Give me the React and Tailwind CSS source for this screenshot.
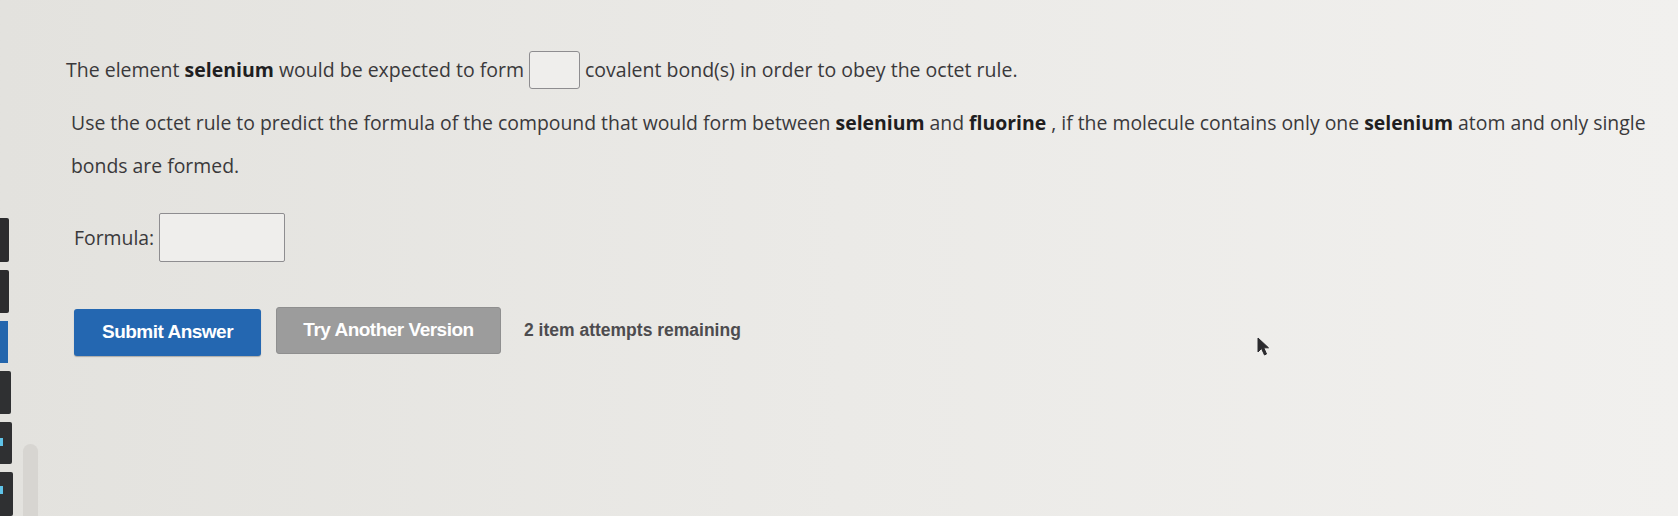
import React from 'react';

function Cursor() {
  return (
    <svg width="14" height="20" viewBox="0 0 14 20" className="absolute left-[1257px] top-[337px]">
      <path d="M1 1 L1 15 L4.5 11.5 L7.5 18 L9.5 17 L6.8 10.8 L11.5 10.8 Z" fill="#2b2a2e" stroke="#2b2a2e" strokeWidth="1" strokeLinejoin="round" />
    </svg>
  );
}

function SideStrip() {
  return (
    <div className="flex w-[10px] shrink-0 flex-col gap-[8px] pt-[218px]">
      <div className="h-[44px] w-[9px] rounded-r-[2px] bg-[#2c2c2e]" />
      <div className="h-[43px] w-[9px] rounded-r-[2px] bg-[#2c2c2e]" />
      <div className="h-[43px] w-[8px] bg-[#2466ad]" />
      <div className="h-[43px] w-[11px] rounded-r-[2px] bg-[#2f3032]" />
      <div className="relative h-[42px] w-[12px] rounded-r-[2px] bg-[#2f3032]">
        <span className="absolute left-0 top-[16px] h-[8px] w-[3px] bg-[#5fc3e8]" />
      </div>
      <div className="relative h-[44px] w-[13px] rounded-r-[2px] bg-[#2f3032]">
        <span className="absolute left-0 top-[14px] h-[8px] w-[3px] bg-[#5fc3e8]" />
      </div>
    </div>
  );
}

export default function App() {
  return (
    <div
      className="relative flex h-[516px] w-full overflow-hidden bg-linear-to-r from-[#e3e2de] via-[#ebeae7] to-[#f1f0ee] text-[#3a393b]"
      style={{ fontFamily: '"Open Sans", "Noto Sans", sans-serif' }}
    >
      <SideStrip />

      {/* scroll track */}
      <div className="flex w-[56px] shrink-0 flex-col justify-end pl-[13px]">
        <div className="h-[72px] w-[15px] rounded-t-full bg-[#d7d5d1]" />
      </div>

      <div className="flex flex-col pt-[51px]">
        {/* question 1 */}
        <div className="flex items-center whitespace-nowrap text-[19.5px]">
          <span>
            The element <b className="font-bold text-[#1f1e21]">selenium</b> would be expected to form
          </span>
          <span className="mx-[5px] h-[38px] w-[51px] rounded-[3px] border border-[#8e8d90] bg-[#efeeec]" />
          <span>covalent bond(s) in order to obey the octet rule.</span>
        </div>

        {/* question 2 */}
        <p className="ml-[5px] mt-[12px] whitespace-nowrap text-[19.4px] leading-[43px]">
          Use the octet rule to predict the formula of the compound that would form between{' '}
          <b className="font-bold text-[#1f1e21]">selenium</b> and <b className="font-bold text-[#1f1e21]">fluorine</b> , if the
          molecule contains only one <b className="font-bold text-[#1f1e21]">selenium</b> atom and only single
          <br />
          bonds are formed.
        </p>

        <div className="ml-[8px] mt-[26px] flex items-center gap-[5px] text-[19.4px]">
          <span>Formula:</span>
          <span className="h-[49px] w-[126px] rounded-[2px] border border-[#8e8d90] bg-[#efeeec]" />
        </div>

        <div
          className="ml-[8px] mt-[43px] flex items-center"
          style={{ fontFamily: '"Liberation Sans", Arial, sans-serif' }}
        >
          <button className="mt-[4px] h-[47px] w-[187px] rounded-[3px] bg-[#2467b1] text-[19px] font-bold tracking-[-0.5px] text-white shadow-[0_1px_1px_rgba(0,0,0,0.25)]">
            Submit Answer
          </button>
          <button className="ml-[15px] h-[47px] w-[225px] rounded-[3px] border border-[#8f8f8f] bg-[#9c9c9c] text-[19px] font-bold tracking-[-0.5px] text-white">
            Try Another Version
          </button>
          <span className="ml-[23px] text-[17.5px] font-bold text-[#4d4c4f]">2 item attempts remaining</span>
        </div>
      </div>

      <Cursor />
    </div>
  );
}
